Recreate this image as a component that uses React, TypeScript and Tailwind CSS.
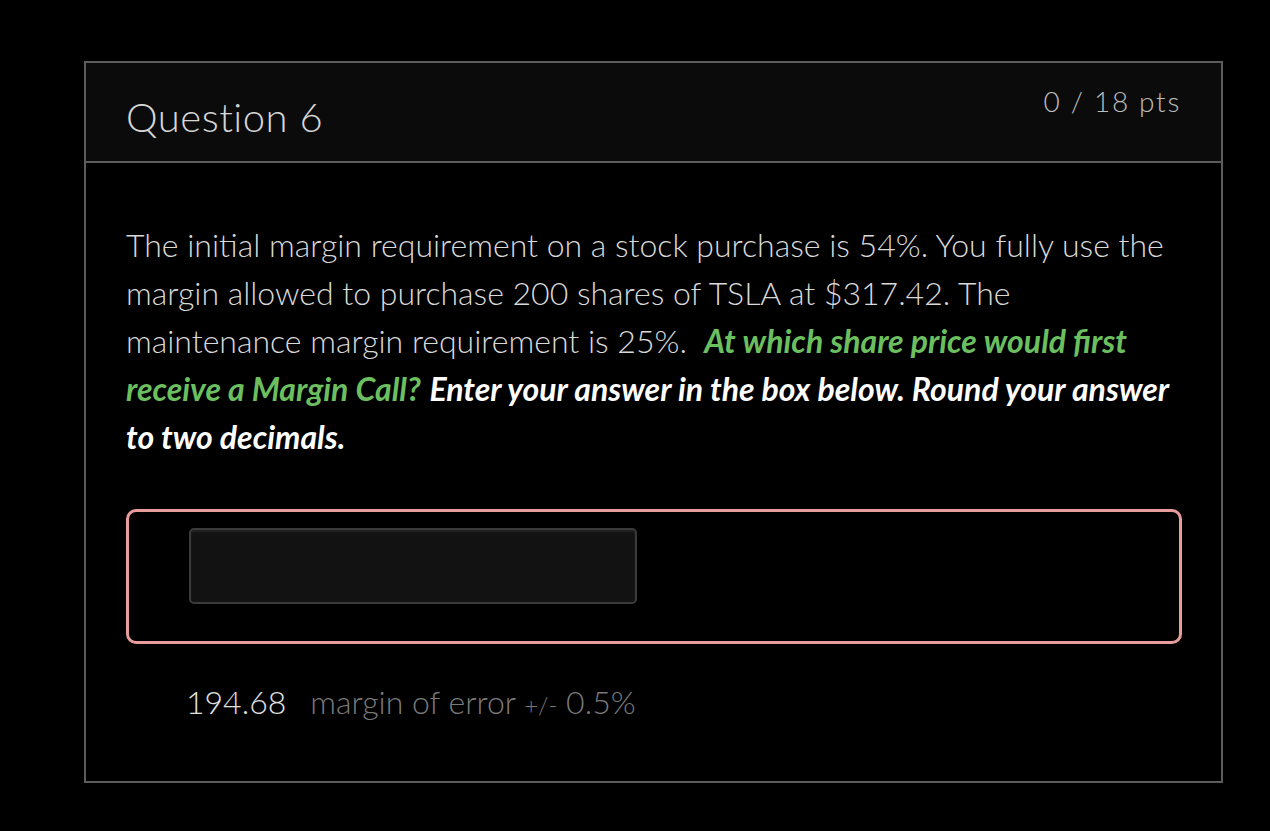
export default function App() {
  return (
    <div className="min-h-[831px] w-[1270px] bg-black pt-[61px] pl-[84px] font-['Lato_Light','Lato',sans-serif]">
      <div className="w-[1139px] h-[722px] border-2 border-[#5c5c5c] flex flex-col">
        <div className="h-[100px] bg-[#0b0b0b] border-b-2 border-[#5c5c5c] flex justify-between pl-[40px] pr-[40px]">
          <h2 className="mt-[28px] text-[40px] leading-[52px] font-light text-[#d6d6d6] tracking-[0.5px]">Question 6</h2>
          <div className="mt-[22px] text-[28px] leading-[32px] font-light text-[#bdbdbd] tracking-[1.7px]">0 / 18 pts</div>
        </div>
        <div className="pl-[40px] pr-[40px] pt-[58px]">
          <p className="text-[32px] leading-[48px] font-light text-[#d9d9d9]">
            The initial margin requirement on a stock purchase is 54%. You fully use the margin allowed to purchase 200 shares of TSLA at $317.42. The maintenance margin requirement is 25%.{"\u00a0 "}
            <span className="font-['Lato',sans-serif] font-bold italic text-[#6cbf5f]">At which share price would first receive a Margin Call?</span>{" "}
            <span className="font-['Lato',sans-serif] font-bold italic text-white">Enter your answer in the box below. Round your answer to two decimals.</span>
          </p>
          <div className="mt-[48px] h-[135px] w-[1056px] border-[3px] border-[#e89c9c] rounded-[10px] pl-[60px] pt-[16px]">
            <div className="w-[448px] h-[76px] bg-[#121212] border-2 border-[#3a3a3a] rounded-[5px] shadow-[inset_0_2px_2px_rgba(255,255,255,0.08)]"></div>
          </div>
          <div className="mt-[40px] pl-[60px] text-[32px] leading-[36px] font-light flex items-baseline gap-[24px]">
            <span className="text-[#e0e0e0]">194.68</span>
            <span className="text-[#7a7a7a]">
              margin of error <span className="text-[24px]">+/-</span> 0.5%
            </span>
          </div>
        </div>
      </div>
    </div>
  );
}
